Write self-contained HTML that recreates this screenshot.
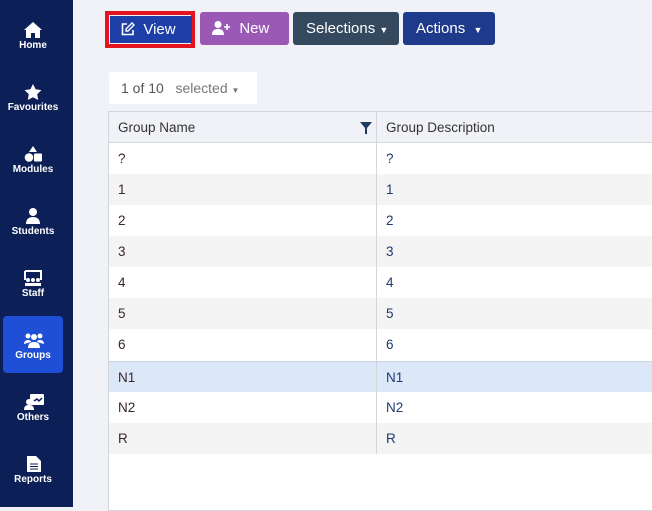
<!DOCTYPE html><html><head><style>
*{margin:0;padding:0;box-sizing:border-box}
body{width:652px;height:507px;overflow:hidden;background:#f0f2f7;font-family:"Liberation Sans",sans-serif;position:relative}
.sb{position:absolute;left:0;top:0;width:73px;height:507px;background:#0c1f57}
.it{position:absolute;left:3px;width:60px;height:57px;color:#fff;font-size:10px;font-weight:bold;text-align:center}
.it svg{position:absolute;left:21px;top:20px}
.it span{position:absolute;left:0;right:0;top:38px}
.act{position:absolute;left:3px;top:316px;width:60px;height:57px;background:#1f4fd6;border-radius:4px}
.btn{position:absolute;top:12px;height:33px;border-radius:3px;color:#fff;font-size:15px;line-height:33px}
.tbl{position:absolute;left:108px;top:111px;width:560px;height:400px;background:#fff;border:1px solid #d4d6da}
.row{position:absolute;left:0;width:560px;height:31px;font-size:13.5px;line-height:31px}
.c1{position:absolute;left:9px;color:#3a2530}.c2{position:absolute;left:277px;color:#1f3a6e}
</style></head><body>
<div class="sb">
<div class="act"></div>
<div class="it" style="top:2px"><svg width="18" height="16" viewBox="0 0 18 16"><path d="M9 0L0 8h2v8h5v-5h4v5h5V8h2z" fill="#fff"/></svg><span>Home</span></div>
<div class="it" style="top:64px"><svg width="18" height="16" viewBox="0 0 18 16"><path d="M9 0l2.6 5.3 5.8.8-4.2 4.1 1 5.8L9 13.2 3.8 16l1-5.8L.6 6.1l5.8-.8z" fill="#fff"/></svg><span>Favourites</span></div>
<div class="it" style="top:126px"><svg width="18" height="16" viewBox="0 0 18 16"><path d="M9 0l4 6H5z" fill="#fff"/><circle cx="5" cy="11.5" r="4.3" fill="#fff"/><rect x="10" y="7.5" width="8" height="8" rx="1" fill="#fff"/></svg><span>Modules</span></div>
<div class="it" style="top:188px"><svg width="18" height="16" viewBox="0 0 18 16"><circle cx="9" cy="4" r="4" fill="#fff"/><path d="M2 16c0-5 3-7 7-7s7 2 7 7z" fill="#fff"/></svg><span>Students</span></div>
<div class="it" style="top:250px"><svg width="18" height="16" viewBox="0 0 18 16"><path d="M1 1h16v9" stroke="#fff" stroke-width="2" fill="none"/><path d="M1 1v9" stroke="#fff" stroke-width="2"/><circle cx="4" cy="10" r="2" fill="#fff"/><circle cx="9" cy="10" r="2" fill="#fff"/><circle cx="14" cy="10" r="2" fill="#fff"/><rect x="1" y="13" width="16" height="3" fill="#fff"/></svg><span>Staff</span></div>
<div class="it" style="top:312px"><svg width="20" height="16" viewBox="0 0 20 16"><circle cx="4" cy="4" r="2.5" fill="#fff"/><circle cx="16" cy="4" r="2.5" fill="#fff"/><circle cx="10" cy="5" r="3" fill="#fff"/><path d="M0 12c0-3 2-4 4-4s3 1 3 2M20 12c0-3-2-4-4-4s-3 1-3 2" fill="#fff"/><path d="M4 16c0-5 3-6 6-6s6 1 6 6z" fill="#fff"/></svg><span>Groups</span></div>
<div class="it" style="top:374px"><svg width="20" height="16" viewBox="0 0 20 16"><rect x="6" y="0" width="14" height="11" rx="1" fill="#fff"/><path d="M10 7l3-2 2 2 3-3" stroke="#0c1f57" stroke-width="1.5" fill="none"/><circle cx="5" cy="8" r="3" fill="#fff"/><path d="M0 16c0-4 2-5 5-5s5 1 5 5z" fill="#fff"/></svg><span>Others</span></div>
<div class="it" style="top:436px"><svg width="14" height="16" viewBox="0 0 14 16" style="left:24px"><path d="M0 0h9l5 5v11H0z" fill="#fff"/><path d="M3 8h8M3 10.5h8M3 13h8" stroke="#0c1f57" stroke-width="1"/></svg><span>Reports</span></div>
</div>
<div style="position:absolute;left:105px;top:11px;width:90px;height:37px;border:4px solid #e3141e"></div>
<div class="btn" style="left:110px;top:16px;width:82px;height:27px;line-height:27px;background:#1e3fa8;border-radius:0;padding-left:11px"><svg width="14" height="14" viewBox="0 0 14 14" style="vertical-align:-2px"><path d="M6 2H1.5v10.5H12V8" stroke="#fff" stroke-width="1.6" fill="none"/><path d="M11 1l2 2-6 6H5V7z" stroke="#fff" stroke-width="1.4" fill="none"/></svg> &nbsp;View</div>
<div class="btn" style="left:200px;width:89px;background:#9b59b6;padding-left:12px"><svg width="19" height="14" viewBox="0 0 19 14" style="vertical-align:-2px"><circle cx="6" cy="3.5" r="3.5" fill="#fff"/><path d="M0 14c0-5 3-6 6-6s6 1 6 6z" fill="#fff"/><path d="M15 3v6M12 6h6" stroke="#fff" stroke-width="1.6"/></svg> &nbsp;New</div>
<div class="btn" style="left:293px;width:106px;background:#34495e;padding-left:13px">Selections <span style="font-size:9px">▼</span></div>
<div class="btn" style="left:403px;width:92px;background:#1e3a8a;padding-left:13px">Actions &nbsp;<span style="font-size:9px">▼</span></div>
<div style="position:absolute;left:109px;top:72px;width:148px;height:32px;background:#fff;border-radius:3px;font-size:14px;line-height:32px;padding-left:12px;color:#555">1 of 10 &nbsp;&nbsp;<span style="color:#777">selected <span style="font-size:8px">▼</span></span></div>
<div class="tbl">
<div class="row" style="top:0;background:#f0f2f7;border-bottom:1px solid #d4d6da;color:#333"><span style="position:absolute;left:9px">Group Name</span><svg width="12" height="12" viewBox="0 0 12 12" style="position:absolute;left:251px;top:10px"><path d="M0 0h12L7 6v6H5V6z" fill="#1f3a5e"/></svg><span style="position:absolute;left:277px">Group Description</span></div>
<div class="row" style="top:31px"><span class="c1">?</span><span class="c2">?</span></div>
<div class="row" style="top:62px;background:#f4f4f4"><span class="c1">1</span><span class="c2">1</span></div>
<div class="row" style="top:93px"><span class="c1">2</span><span class="c2">2</span></div>
<div class="row" style="top:124px;background:#f4f4f4"><span class="c1">3</span><span class="c2">3</span></div>
<div class="row" style="top:155px"><span class="c1">4</span><span class="c2">4</span></div>
<div class="row" style="top:186px;background:#f4f4f4"><span class="c1">5</span><span class="c2">5</span></div>
<div class="row" style="top:217px"><span class="c1">6</span><span class="c2">6</span></div>
<div class="row" style="top:249px;background:#dce8f8;border-top:1px solid #c8d4e4"><span class="c1">N1</span><span class="c2">N1</span></div>
<div class="row" style="top:280px"><span class="c1">N2</span><span class="c2">N2</span></div>
<div class="row" style="top:311px;background:#f4f4f4"><span class="c1">R</span><span class="c2">R</span></div>
<div style="position:absolute;left:267px;top:0;width:1px;height:342px;background:#d4d6da"></div>
</div>
</body></html>
